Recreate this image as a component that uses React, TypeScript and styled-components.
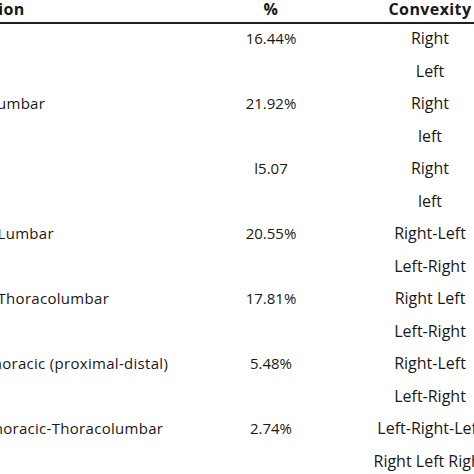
import styled, { createGlobalStyle } from 'styled-components';

const GlobalStyle = createGlobalStyle`
  html, body {
    margin: 0;
    padding: 0;
    background: #ffffff;
  }
  body {
    font-family: 'Open Sans', 'Noto Sans', 'Liberation Sans', sans-serif;
    color: #1a1718;
  }
`;

interface CurveRow {
  location?: string;
  shift?: number;
  percent?: string;
  convexity: string;
}

// location text runs off the left edge of the crop, so each row gets its own nudge
const rows: CurveRow[] = [
  { location: 'Thoracic', shift: -4, percent: '16.44%', convexity: 'Right' },
  { convexity: 'Left' },
  { location: 'Thoracolumbar', shift: -2.4, percent: '21.92%', convexity: 'Right' },
  { convexity: 'left' },
  { location: 'Lumbar', shift: -30, percent: 'l5.07', convexity: 'Right' },
  { convexity: 'left' },
  { location: 'Thoracic Lumbar', shift: -4.2, percent: '20.55%', convexity: 'Right-Left' },
  { convexity: 'Left-Right' },
  { location: 'Thoracic Thoracolumbar', shift: -4.2, percent: '17.81%', convexity: 'Right Left' },
  { convexity: 'Left-Right' },
  { location: 'Double Thoracic (proximal-distal)', shift: -8.4, percent: '5.48%', convexity: 'Right-Left' },
  { convexity: 'Left-Right' },
  { location: 'Double Thoracic-Thoracolumbar', shift: -7.4, percent: '2.74%', convexity: 'Left-Right-Left' },
  { convexity: 'Right Left Right' },
];

const App = () => {
  return (
    <>
      <GlobalStyle />
      <Frame>
        <Table>
          <HeaderRow>
            <LocationCell $shift={17}>Location</LocationCell>
            <PercentCell>%</PercentCell>
            <ConvexityCell>Convexity</ConvexityCell>
          </HeaderRow>
          <HeaderRule />
          <Body>
            {rows.map((row, i) => (
              <BodyRow key={i}>
                <LocationCell $shift={row.shift ?? 0}>{row.location}</LocationCell>
                <PercentCell>{row.percent}</PercentCell>
                <ConvexityCell>{row.convexity}</ConvexityCell>
              </BodyRow>
            ))}
          </Body>
        </Table>
      </Frame>
    </>
  );
};

export default App;

const Frame = styled.div`
  width: 474px;
  height: 474px;
  overflow: hidden;
  background: #ffffff;
`;

const Table = styled.div`
  width: 622px;
  margin-left: -64px;
  padding-top: 1px;
`;

const RowBase = styled.div`
  display: grid;
  grid-template-columns: 304px 62px 256px;
  white-space: nowrap;
  font-size: 15px;
`;

const HeaderRow = styled(RowBase)`
  align-items: center;
  font-weight: 700;
  font-size: 16px;
  letter-spacing: 0.4px;
  line-height: 16px;
  padding-bottom: 5px;
`;

const HeaderRule = styled.hr`
  display: block;
  margin: 0;
  border: 0;
  width: 100%;
  height: 2px;
  background-color: #231f20;
`;

const Body = styled.div`
  display: flex;
  flex-direction: column;
`;

const BodyRow = styled(RowBase)`
  align-items: start;
  height: 32.5px;
  line-height: 28.5px;
`;

const LocationCell = styled.div<{ $shift: number }>`
  text-align: left;
  letter-spacing: 0.3px;
  padding-left: ${(props) => (props.$shift > 0 ? props.$shift : 0)}px;
  margin-left: ${(props) => (props.$shift < 0 ? props.$shift : 0)}px;
`;

const PercentCell = styled.div`
  text-align: center;
`;

const ConvexityCell = styled.div`
  text-align: center;
  font-size: 16px;
`;
